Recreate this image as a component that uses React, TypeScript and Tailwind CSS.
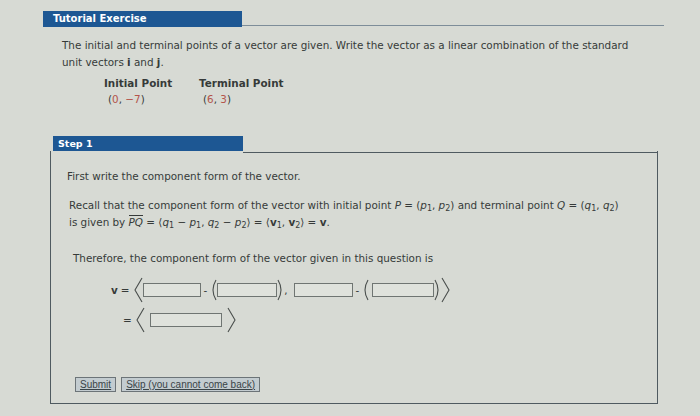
import React from "react";

const Box = ({ w }: { w: string }) => (
  <span className={`inline-block h-[14px] ${w} border border-[#6f7572] bg-[#dfe2dc] align-middle`} />
);

const Angle = ({ right }: { right?: boolean }) => (
  <svg width="9" height="26" viewBox="0 0 9 26" className="inline-block align-middle">
    <polyline
      points={right ? "1,1 8,13 1,25" : "8,1 1,13 8,25"}
      fill="none"
      stroke="#4a4f4d"
      strokeWidth="1.1"
    />
  </svg>
);

const Paren = ({ right }: { right?: boolean }) => (
  <svg width="7" height="22" viewBox="0 0 7 22" className="inline-block align-middle">
    <path
      d={right ? "M1,1 Q7,11 1,21" : "M6,1 Q0,11 6,21"}
      fill="none"
      stroke="#4a4f4d"
      strokeWidth="1.1"
    />
  </svg>
);

const Red = ({ children }: { children: React.ReactNode }) => (
  <span className="text-[#b4544a]">{children}</span>
);

const Sub = ({ children }: { children: React.ReactNode }) => (
  <sub className="text-[8px]">{children}</sub>
);

export default function App() {
  return (
    <div
      className="w-[700px] h-[416px] overflow-hidden bg-[#d7dad4] text-[#363a39] pt-[11px] pl-[43px] text-[10.4px] leading-[17px]"
      style={{ fontFamily: '"DejaVu Sans", Verdana, sans-serif' }}
    >
      {/* Tutorial header */}
      <div className="flex items-end w-[621px]">
        <div className="w-[199px] h-[16px] bg-[#1d5793] text-white font-bold text-[10px] leading-[16px] pl-[10px]">
          Tutorial Exercise
        </div>
        <div className="flex-1 border-b border-[#7d8d99] mb-[1px]" />
      </div>

      <div className="ml-[19px] mt-[10px] w-[575px]">
        <p>
          The initial and terminal points of a vector are given. Write the vector as a linear combination of the standard
          unit vectors <b>i</b> and <b>j</b>.
        </p>
        <div className="flex ml-[42px] mt-[4px]">
          <div className="w-[95px]">
            <div className="font-bold">Initial Point</div>
            <div className="pl-[4px] -mt-[1px]">
              (<Red>0</Red>, <Red>−7</Red>)
            </div>
          </div>
          <div>
            <div className="font-bold">Terminal Point</div>
            <div className="pl-[4px] -mt-[1px]">
              (<Red>6</Red>, <Red>3</Red>)
            </div>
          </div>
        </div>
      </div>

      {/* Step 1 */}
      <div className="ml-[7px] mt-[28px] w-[608px]">
        <div className="flex items-end">
          <div className="ml-[3px] w-[190px] h-[15px] bg-[#1d5793] text-white font-bold text-[9.5px] leading-[15px] pl-[5px]">
            Step 1
          </div>
          <div className="flex-1 border-b border-[#4f5a60] -mb-[2px]" />
        </div>
        <div className="h-[253px] border-l border-r border-b border-[#4f5a60] pl-[16px] pt-[17px]">
          <p>First write the component form of the vector.</p>
          <p className="mt-[12px] pl-[2px]">
            Recall that the component form of the vector with initial point <i>P</i> = (<i>p</i>
            <Sub>1</Sub>, <i>p</i>
            <Sub>2</Sub>) and terminal point <i>Q</i> = (<i>q</i>
            <Sub>1</Sub>, <i>q</i>
            <Sub>2</Sub>)
            <br />
            is given by{" "}
            <span className="relative inline-block">
              <span className="absolute left-0 right-0 top-[1px] h-[1px] bg-[#363a39]" />
              <i>PQ</i>
            </span>{" "}
            = ⟨<i>q</i>
            <Sub>1</Sub> − <i>p</i>
            <Sub>1</Sub>, <i>q</i>
            <Sub>2</Sub> − <i>p</i>
            <Sub>2</Sub>⟩ = ⟨<b>v</b>
            <Sub>1</Sub>, <b>v</b>
            <Sub>2</Sub>⟩ = <b>v</b>.
          </p>
          <p className="mt-[19px] pl-[6px]">Therefore, the component form of the vector given in this question is</p>

          <div className="mt-[9px] ml-[44px] flex items-center h-[28px]">
            <span className="font-bold mr-[3px]">v</span>
            <span className="mr-[4px]">=</span>
            <Angle />
            <Box w="w-[58px]" />
            <span className="mx-[3px]">-</span>
            <Paren />
            <Box w="w-[60px]" />
            <Paren right />
            <span className="mr-[6px]">,</span>
            <Box w="w-[59px]" />
            <span className="mx-[3px]">-</span>
            <Paren />
            <span className="ml-[3px]" />
            <Box w="w-[62px]" />
            <Paren right />
            <Angle right />
          </div>
          <div className="mt-[2px] ml-[56px] flex items-center h-[28px]">
            <span className="mr-[4px]">=</span>
            <Angle />
            <span className="ml-[5px]" />
            <Box w="w-[72px]" />
            <span className="ml-[5px]" />
            <Angle right />
          </div>

          <div
            className="mt-[43px] ml-[8px] flex gap-[5px] text-[10px] leading-[12px]"
            style={{ fontFamily: '"Liberation Sans", Arial, sans-serif' }}
          >
            <button className="h-[15px] px-[4px] border border-[#6c7478] bg-[#c3ccd0] text-[#3a4448] underline">
              Submit
            </button>
            <button className="h-[15px] px-[4px] border border-[#6c7478] bg-[#c3ccd0] text-[#3a4448] underline">
              Skip (you cannot come back)
            </button>
          </div>
        </div>
      </div>
    </div>
  );
}
